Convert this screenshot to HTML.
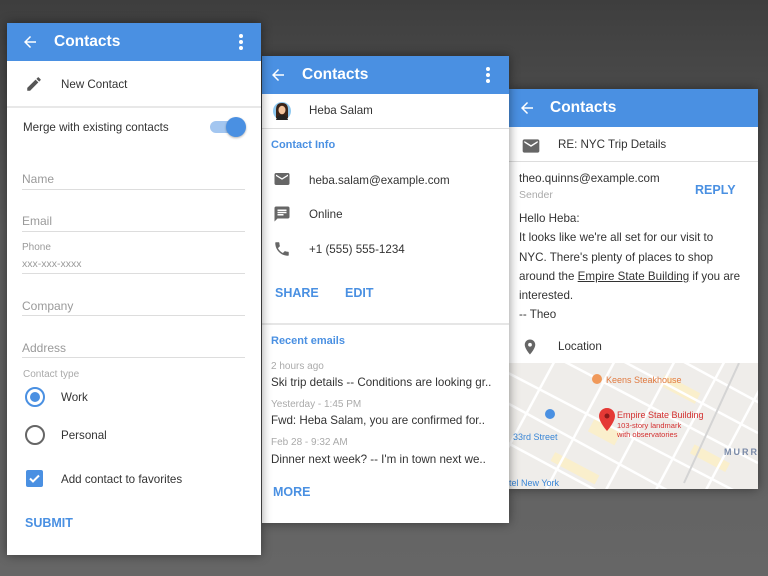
<!DOCTYPE html>
<html><head><meta charset="utf-8"><style>
*{box-sizing:border-box;margin:0;padding:0}
body{width:768px;height:576px;overflow:hidden;background:linear-gradient(#3e3e3e,#5c5c5c 40%,#666);font-family:"Liberation Sans",sans-serif;position:relative;color:#333}
.card{position:absolute;background:#fff;box-shadow:0 0 10px rgba(0,0,0,.45);overflow:hidden}
.hdr{height:38px;background:#4a90e2;color:#fff;position:relative}
.hdr .t{position:absolute;left:47px;top:10px;font-size:15.5px;font-weight:bold}
.hdr svg{position:absolute}
.a{position:absolute;white-space:nowrap}
.blue{color:#4a90e2;font-weight:bold}
.ln{position:absolute;height:1px;background:#ddd}
.gray{color:#9a9a9a}
</style></head><body>

<!-- card3 -->
<div class="card" style="left:509px;top:89px;width:249px;height:400px;z-index:1">
<div class="hdr"><svg style="left:9px;top:10px" width="18" height="18" viewBox="0 0 24 24"><path d="M20 11H7.8l5.6-5.6L12 4l-8 8 8 8 1.4-1.4L7.8 13H20z" fill="#fff"/></svg><div class="t" style="left:41px;top:10px">Contacts</div></div>
<svg class="a" style="left:12px;top:47px" width="20" height="20" viewBox="0 0 24 24"><path d="M20 4H4c-1.1 0-2 .9-2 2v12c0 1.1.9 2 2 2h16c1.1 0 2-.9 2-2V6c0-1.1-.9-2-2-2zm0 4l-8 5-8-5V6l8 5 8-5z" fill="#666"/></svg>
<div class="a" style="left:49px;top:49px;font-size:11.6px">RE: NYC Trip Details</div>
<div class="ln" style="left:0;right:0;top:72px"></div>
<div class="a" style="left:10px;top:83px;font-size:11.6px">theo.quinns@example.com</div>
<div class="a gray" style="left:10px;top:100px;font-size:10.5px;color:#aaa">Sender</div>
<div class="a blue" style="left:186px;top:94px;font-size:12.5px">REPLY</div>
<div class="a" style="left:10px;top:120px;font-size:11.6px;line-height:19.3px">Hello Heba:<br>It looks like we're all set for our visit to<br>NYC. There's plenty of places to shop<br>around the <u>Empire State Building</u> if you are<br>interested.<br>-- Theo</div>
<svg class="a" style="left:12px;top:248px" width="18" height="20" viewBox="0 0 24 24"><path d="M12 2C8.1 2 5 5.1 5 9c0 5.2 7 13 7 13s7-7.8 7-13c0-3.9-3.1-7-7-7zm0 9.5a2.5 2.5 0 110-5 2.5 2.5 0 010 5z" fill="#666"/></svg>
<div class="a" style="left:49px;top:251px;font-size:11.6px">Location</div>
<svg class="a" style="left:0;top:274px" width="249" height="126" viewBox="0 0 249 126">
<rect width="249" height="126" fill="#efedea"/>
<g fill="#faefcc"><rect x="80" y="60" width="30" height="16" transform="rotate(28 95 70)"/><rect x="150" y="20" width="40" height="12" transform="rotate(28 170 28)"/><rect x="40" y="100" width="50" height="10" transform="rotate(28 65 107)"/><rect x="180" y="90" width="40" height="10" transform="rotate(28 200 97)"/></g>
<g stroke="#fff" stroke-width="2.5">
<line x1="-20" y1="0" x2="249" y2="140"/><line x1="-20" y1="30" x2="200" y2="150"/><line x1="20" y1="-20" x2="249" y2="100"/><line x1="80" y1="-20" x2="249" y2="70"/><line x1="140" y1="-20" x2="260" y2="45"/><line x1="-20" y1="70" x2="120" y2="145"/>
<line x1="30" y1="140" x2="110" y2="-10"/><line x1="90" y1="140" x2="170" y2="-10"/><line x1="140" y1="140" x2="220" y2="-10"/><line x1="190" y1="140" x2="270" y2="-10"/><line x1="-20" y1="120" x2="50" y2="-10"/></g>
<line x1="175" y1="120" x2="230" y2="0" stroke="#d4d4d4" stroke-width="2"/>
<circle cx="88" cy="16" r="5" fill="#f0995a"/>
<text x="97" y="20" font-size="9" fill="#e07a40" font-family="Liberation Sans">Keens Steakhouse</text>
<circle cx="41" cy="51" r="5" fill="#4a90e2"/>
<text x="4" y="77" font-size="9" fill="#3a86d6" font-family="Liberation Sans">33rd Street</text>
<path d="M98 45c-5 0-8 4-8 8 0 6 8 15 8 15s8-9 8-15c0-4-3-8-8-8z" fill="#e53935"/><circle cx="98" cy="53" r="2.5" fill="#8b1a1a"/>
<text x="108" y="55" font-size="9" fill="#d32f2f" font-family="Liberation Sans">Empire State Building</text>
<text x="108" y="65" font-size="7.5" fill="#d32f2f" font-family="Liberation Sans">103-story landmark</text>
<text x="108" y="74" font-size="7.5" fill="#d32f2f" font-family="Liberation Sans">with observatories</text>
<text x="215" y="92" font-size="9" fill="#7a8aa8" font-weight="bold" letter-spacing="2" font-family="Liberation Sans">MURR</text>
<text x="0" y="123" font-size="9" fill="#3a86d6" font-family="Liberation Sans">tel New York</text>
</svg>
</div>

<!-- card2 -->
<div class="card" style="left:262px;top:56px;width:247px;height:467px;z-index:2">
<div class="hdr"><svg style="left:7px;top:10px" width="18" height="18" viewBox="0 0 24 24"><path d="M20 11H7.8l5.6-5.6L12 4l-8 8 8 8 1.4-1.4L7.8 13H20z" fill="#fff"/></svg><div class="t" style="left:40px;top:10px">Contacts</div><svg style="left:222px;top:10px" width="8" height="18"><circle cx="4" cy="3" r="2" fill="#fff"/><circle cx="4" cy="9" r="2" fill="#fff"/><circle cx="4" cy="15" r="2" fill="#fff"/></svg></div>
<svg class="a" style="left:11px;top:45px" width="18" height="20" viewBox="0 0 18 20"><circle cx="9" cy="10" r="9" fill="#8ec8ef"/><path d="M3 9c0-5 2-7 6-7s6 2 6 7v8H3z" fill="#3a2418"/><ellipse cx="9" cy="9" rx="3.5" ry="4.3" fill="#f2c39c"/><path d="M3 19c1-4 3-5 6-5s5 1 6 5z" fill="#222"/></svg>
<div class="a" style="left:47px;top:48px;font-size:11.6px">Heba Salam</div>
<div class="ln" style="left:0;right:0;top:72px"></div>
<div class="a blue" style="left:9px;top:83px;font-size:11px">Contact Info</div>
<svg class="a" style="left:11px;top:114px" width="18" height="18" viewBox="0 0 24 24"><path d="M20 4H4c-1.1 0-2 .9-2 2v12c0 1.1.9 2 2 2h16c1.1 0 2-.9 2-2V6c0-1.1-.9-2-2-2zm0 4l-8 5-8-5V6l8 5 8-5z" fill="#666"/></svg>
<div class="a" style="left:47px;top:118px;font-size:11.6px">heba.salam@example.com</div>
<svg class="a" style="left:11px;top:149px" width="18" height="18" viewBox="0 0 24 24"><path d="M20 2H4c-1.1 0-2 .9-2 2v18l4-4h14c1.1 0 2-.9 2-2V4c0-1.1-.9-2-2-2zM6 9h12v2H6zm8 5H6v-2h8zm4-6H6V6h12z" fill="#666"/></svg>
<div class="a" style="left:47px;top:152px;font-size:11.6px">Online</div>
<svg class="a" style="left:11px;top:184px" width="18" height="18" viewBox="0 0 24 24"><path d="M6.6 10.8c1.4 2.8 3.8 5.1 6.6 6.6l2.2-2.2c.3-.3.7-.4 1-.2 1.1.4 2.3.6 3.6.6.6 0 1 .4 1 1V20c0 .6-.4 1-1 1C10.6 21 3 13.4 3 4c0-.6.4-1 1-1h3.5c.6 0 1 .4 1 1 0 1.3.2 2.5.6 3.6.1.3 0 .7-.2 1z" fill="#666"/></svg>
<div class="a" style="left:47px;top:187px;font-size:11.6px">+1 (555) 555-1234</div>
<div class="a blue" style="left:13px;top:230px;font-size:12.5px">SHARE</div>
<div class="a blue" style="left:83px;top:230px;font-size:12.5px">EDIT</div>
<div class="ln" style="left:0;right:0;top:267px;height:2px;background:#e6e6e6"></div>
<div class="a blue" style="left:9px;top:279px;font-size:11px">Recent emails</div>
<div class="a" style="left:9px;top:305px;font-size:10px;color:#aaa">2 hours ago</div>
<div class="a" style="left:9px;top:320px;font-size:11.6px">Ski trip details -- Conditions are looking gr..</div>
<div class="a" style="left:9px;top:343px;font-size:10px;color:#aaa">Yesterday - 1:45 PM</div>
<div class="a" style="left:9px;top:358px;font-size:11.6px">Fwd: Heba Salam, you are confirmed for..</div>
<div class="a" style="left:9px;top:381px;font-size:10px;color:#aaa">Feb 28 - 9:32 AM</div>
<div class="a" style="left:9px;top:397px;font-size:11.6px">Dinner next week? -- I'm in town next we..</div>
<div class="a blue" style="left:11px;top:429px;font-size:12.5px">MORE</div>
</div>

<!-- card1 -->
<div class="card" style="left:7px;top:23px;width:254px;height:532px;z-index:3">
<div class="hdr"><svg style="left:14px;top:10px" width="18" height="18" viewBox="0 0 24 24"><path d="M20 11H7.8l5.6-5.6L12 4l-8 8 8 8 1.4-1.4L7.8 13H20z" fill="#fff"/></svg><div class="t">Contacts</div><svg style="left:230px;top:10px" width="8" height="18"><circle cx="4" cy="3" r="2" fill="#fff"/><circle cx="4" cy="9" r="2" fill="#fff"/><circle cx="4" cy="15" r="2" fill="#fff"/></svg></div>
<svg class="a" style="left:18px;top:52px" width="18" height="18" viewBox="0 0 24 24"><path d="M3 17.2V21h3.8L17.8 9.9l-3.7-3.7zM20.7 7c.4-.4.4-1 0-1.4l-2.3-2.3c-.4-.4-1-.4-1.4 0l-1.8 1.8 3.7 3.7z" fill="#555"/></svg>
<div class="a" style="left:54px;top:55px;font-size:11.6px">New Contact</div>
<div class="ln" style="left:0;right:0;top:83px;height:2px;background:#e8e8e8"></div>
<div class="a" style="left:16px;top:98px;font-size:11.6px">Merge with existing contacts</div>
<div class="a" style="left:203px;top:98px;width:30px;height:12px;border-radius:6px;background:#a3c6f0"></div>
<div class="a" style="left:219px;top:94px;width:20px;height:20px;border-radius:50%;background:#4a90e2;box-shadow:0 1px 2px rgba(0,0,0,.3)"></div>
<div class="a gray" style="left:15px;top:149px;font-size:12px">Name</div><div class="ln" style="left:15px;width:223px;top:166px"></div>
<div class="a gray" style="left:15px;top:191px;font-size:12px">Email</div><div class="ln" style="left:15px;width:223px;top:208px"></div>
<div class="a gray" style="left:15px;top:219px;font-size:10px">Phone</div>
<div class="a gray" style="left:15px;top:235px;font-size:10.5px">xxx-xxx-xxxx</div><div class="ln" style="left:15px;width:223px;top:250px"></div>
<div class="a gray" style="left:15px;top:276px;font-size:12px">Company</div><div class="ln" style="left:15px;width:223px;top:292px"></div>
<div class="a gray" style="left:15px;top:318px;font-size:12px">Address</div><div class="ln" style="left:15px;width:223px;top:334px"></div>
<div class="a" style="left:16px;top:346px;font-size:10px;color:#aaa">Contact type</div>
<div class="a" style="left:18px;top:364px;width:20px;height:20px;border-radius:50%;border:2px solid #4a90e2"></div>
<div class="a" style="left:23px;top:369px;width:10px;height:10px;border-radius:50%;background:#4a90e2"></div>
<div class="a" style="left:54px;top:368px;font-size:11.6px">Work</div>
<div class="a" style="left:18px;top:402px;width:20px;height:20px;border-radius:50%;border:2px solid #666"></div>
<div class="a" style="left:54px;top:406px;font-size:11.6px">Personal</div>
<div class="a" style="left:19px;top:447px;width:17px;height:17px;border-radius:2px;background:#4a90e2"></div>
<svg class="a" style="left:19px;top:447px" width="17" height="17"><path d="M4 8.5l3 3 6-6" stroke="#fff" stroke-width="2" fill="none"/></svg>
<div class="a" style="left:54px;top:450px;font-size:11.6px">Add contact to favorites</div>
<div class="a blue" style="left:18px;top:493px;font-size:12.5px">SUBMIT</div>
</div>
</body></html>
